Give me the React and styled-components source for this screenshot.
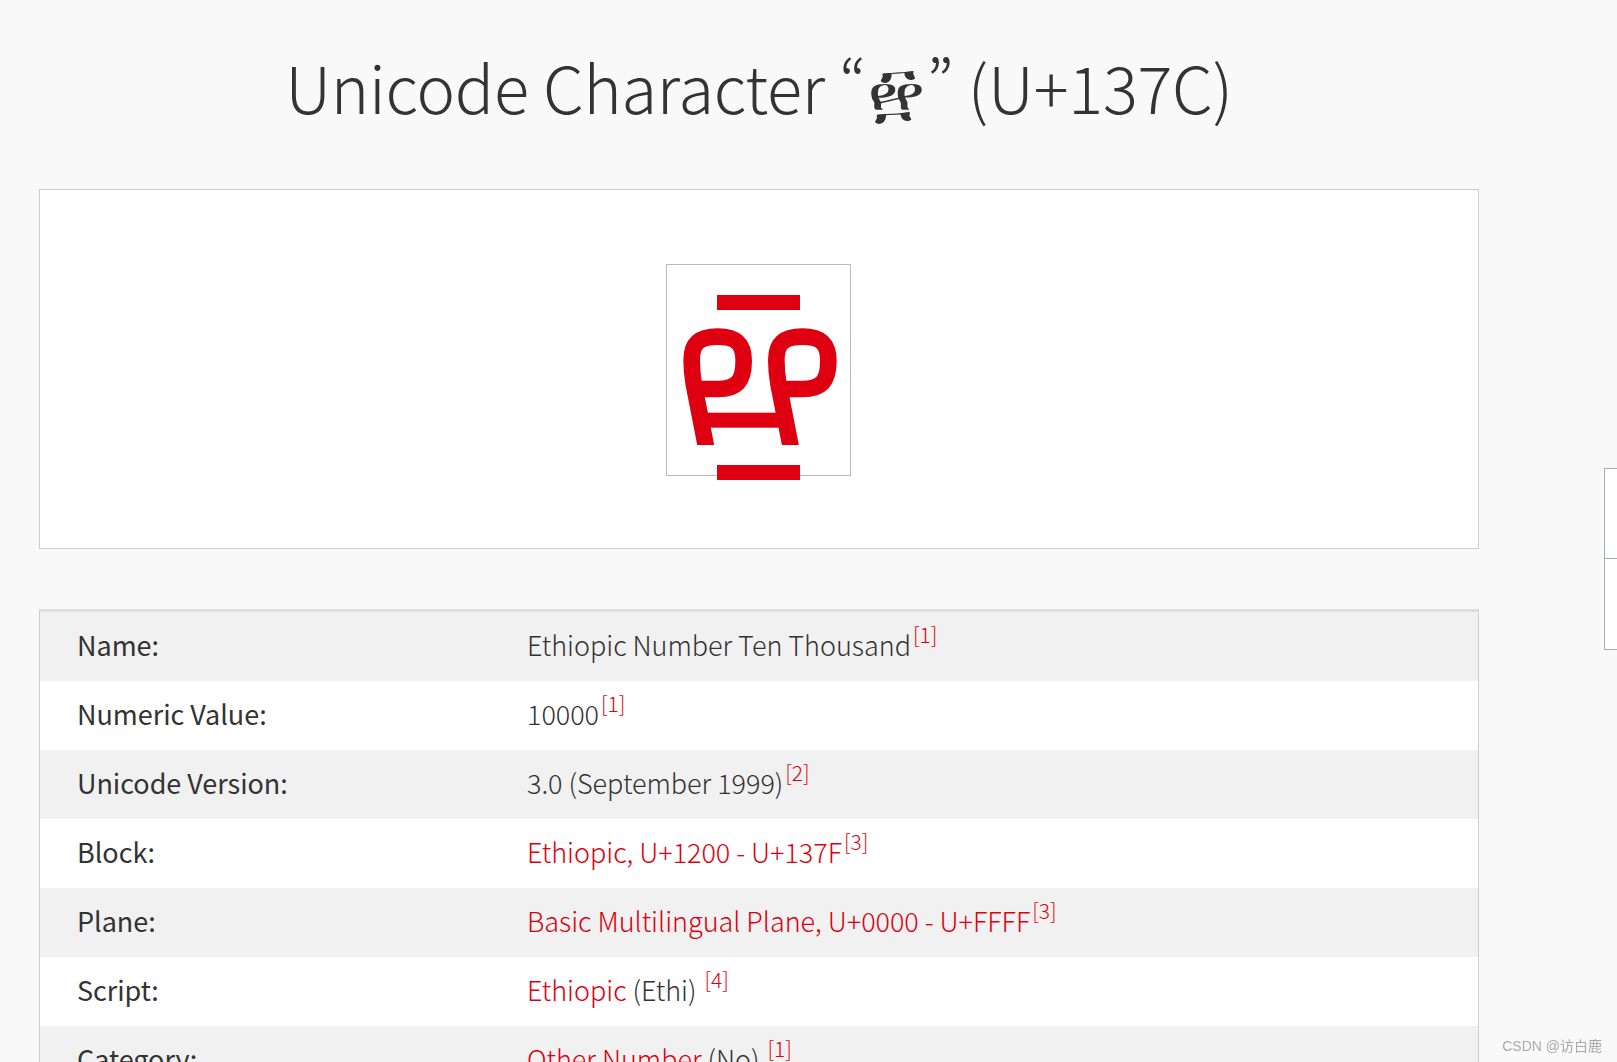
import styled, { createGlobalStyle } from 'styled-components'

const GlobalStyle = createGlobalStyle`
    html, body {
        margin: 0;
        height: 100%;
        overflow: hidden;
        background: #f9f9f9;
    }
    body {
        color: #333;
        font-family: "Noto Sans CJK SC", "Open Sans", sans-serif;
        font-weight: 300;
        font-feature-settings: "pwid";
    }
`

const Page = styled.div`
    box-sizing: border-box;
    width: 1440px;
    margin-left: 39px;
    height: 1062px;
    overflow: hidden;
`

const Title = styled.h1`
    margin: 0;
    padding-top: 36px;
    height: 189px;
    box-sizing: border-box;
    text-align: center;
    font-size: 65px;
    line-height: 100px;
    font-weight: 300;
    letter-spacing: -0.2px;
    white-space: nowrap;
`

const Quoted = styled.span`
    margin: 0 3px 0 2px;
    font-weight: 500;
`

const PictureCard = styled.div`
    box-sizing: border-box;
    height: 360px;
    display: flex;
    justify-content: center;
    padding-top: 74px;
    border: 1px solid #ccc;
    background: #fff;
`

const GlyphFrame = styled.div`
    box-sizing: border-box;
    width: 185px;
    height: 212px;
    margin-right: 2px;
    border: 1px solid #bbb;
    overflow: visible;
`

const GlyphSvg = styled.svg`
    display: block;
    width: 220px;
    height: 235px;
    margin: -10px 0 0 -17px;
`

const Table = styled.div`
    margin-top: 60px;
    border: 1px solid #ccc;
    border-top: 3px solid #ddd;
    border-bottom: none;
    background: #fff;
`

const Row = styled.div`
    display: grid;
    grid-template-columns: 450px 1fr;
    box-sizing: border-box;
    height: 69px;
    padding: 0 0 4px 37px;
    align-items: center;
    font-size: 27px;
    letter-spacing: -0.04px;
    background: ${props => props.$shaded ? '#f1f1f1' : '#fff'};
`

const Label = styled.div`
    font-weight: 400;
`

const Value = styled.div`
    white-space: nowrap;
`

const Link = styled.span`
    color: #de0010;
`

const Ref = styled.sup`
    margin-left: 2px;
    color: #de0010;
    font-size: 21px;
    line-height: 0;
    vertical-align: 13px;
`

const SideWidget = styled.div`
    position: fixed;
    top: 468px;
    right: -1px;
    width: 12px;
    border: 1px solid #a4abb3;
    background: #fff;
`

const SideCell = styled.div`
    height: 89px;
    & + & {
        height: 90px;
        border-top: 1px solid #a4abb3;
    }
`

const Watermark = styled.div`
    position: fixed;
    right: 15px;
    bottom: 7px;
    color: #aaa;
    font-family: "Liberation Sans", "Noto Sans CJK SC", sans-serif;
    font-size: 14px;
    font-weight: 400;
`

const rows = [
    { label: 'Name:', text: 'Ethiopic Number Ten Thousand', ref: 1 },
    { label: 'Numeric Value:', text: '10000', ref: 1 },
    { label: 'Unicode Version:', text: '3.0 (September 1999)', ref: 2 },
    { label: 'Block:', link: 'Ethiopic, U+1200 - U+137F', ref: 3 },
    { label: 'Plane:', link: 'Basic Multilingual Plane, U+0000 - U+FFFF', ref: 3 },
    { label: 'Script:', link: 'Ethiopic', text: ' (Ethi) ', ref: 4 },
    { label: 'Category:', link: 'Other Number', text: ' (No) ', ref: 1 },
]

function BigGlyph() {
    const loop = 'M171 590 L131 385 Q125 350 125 315 C125 262 150 245 203 245 C259 245 281 265 281 318 C281 380 259 402 203 402 L150 402'
    return (
        <GlyphSvg viewBox="0 0 660 705">
            <clipPath id="glyph-bottom">
                <rect x="0" y="0" width="660" height="570" />
            </clipPath>
            <g fill="#de0010">
                <rect x="201" y="120" width="249" height="45" />
                <rect x="201" y="630" width="249" height="45" />
                <rect x="170" y="473" width="220" height="45" />
            </g>
            <g clipPath="url(#glyph-bottom)" fill="none" stroke="#de0010" strokeWidth="50">
                <path d={loop} />
                <path d={loop} transform="translate(254 0)" />
            </g>
        </GlyphSvg>
    )
}

export default function App() {
    return (
        <>
            <GlobalStyle />
            <Page>
                <Title>Unicode Character “<Quoted>፼</Quoted>” (U+137C)</Title>
                <PictureCard>
                    <GlyphFrame>
                        <BigGlyph />
                    </GlyphFrame>
                </PictureCard>
                <Table>
                    {rows.map((row, i) => (
                        <Row key={row.label} $shaded={i % 2 === 0}>
                            <Label>{row.label}</Label>
                            <Value>
                                {row.link && <Link>{row.link}</Link>}
                                {row.text}
                                <Ref>[{row.ref}]</Ref>
                            </Value>
                        </Row>
                    ))}
                </Table>
            </Page>
            <SideWidget>
                <SideCell />
                <SideCell />
            </SideWidget>
            <Watermark>CSDN @访白鹿</Watermark>
        </>
    )
}
